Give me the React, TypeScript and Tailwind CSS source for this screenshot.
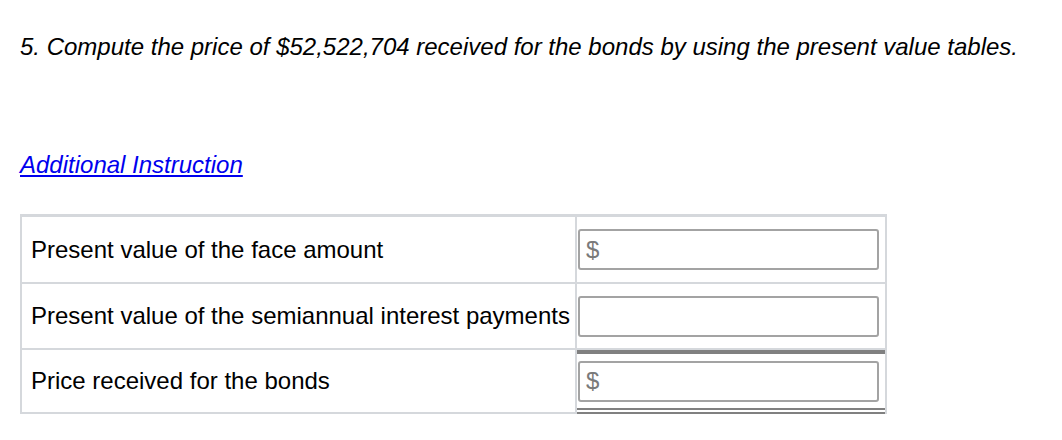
import React from 'react';

const rows = [
  { label: 'Present value of the face amount', dollar: true },
  { label: 'Present value of the semiannual interest payments', dollar: false },
  { label: 'Price received for the bonds', dollar: true, total: true },
];

const App = () => {
  return (
    <div className="w-[1062px] h-[440px] bg-white text-black font-['Liberation_Sans',Arial,sans-serif]">
      <p className="pl-[20px] pt-[33px] text-[24px] leading-[27px] italic">
        5. Compute the price of $52,522,704 received for the bonds by using the present value tables.
      </p>

      <a href="#" className="block w-fit ml-[20px] mt-[91px] text-[24px] leading-[27px] italic underline text-[#0000ee]">
        Additional Instruction
      </a>

      <div className="ml-[20px] mt-[36px] w-[867px] border-t-[3px] border-x-2 border-[#d5d8dc]">
        {rows.map((row, i) => (
          <div key={i} className="flex">
            <div
              className={`w-[555px] flex items-center pl-[9px] border-r-2 border-b-2 border-[#d5d8dc] text-[24px] ${
                i === 0 ? 'h-[67px]' : i === 1 ? 'h-[66px]' : 'h-[64px]'
              }`}
            >
              {row.label}
            </div>
            <div
              className={`flex-1 flex items-center pl-[1px] pr-[6px] ${
                row.total
                  ? 'border-t-[4px] border-t-[#808080] [border-top-style:solid] border-b-[6px] border-b-[#808080] [border-bottom-style:double]'
                  : 'border-b-2 border-[#d5d8dc]'
              }`}
            >
              <div className="w-full h-[41px] border-2 border-[#a3a3a3] rounded-[3px] flex items-center pl-[6px] text-[24px] text-[#7a7a7a]">
                {row.dollar ? '$' : ''}
              </div>
            </div>
          </div>
        ))}
      </div>
    </div>
  );
};

export default App;
